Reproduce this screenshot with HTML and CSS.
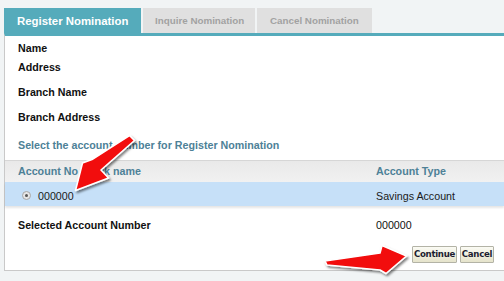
FILE: index.html
```html
<!DOCTYPE html>
<html>
<head>
<meta charset="utf-8">
<link rel="stylesheet" href="styles.css">
</head>
<body>
<div class="page">
  <div class="tabs">
    <div class="tab tab-active tab-1">Register Nomination</div>
    <div class="tab tab-2">Inquire Nomination</div>
    <div class="tab tab-3">Cancel Nomination</div>
  </div>
  <div class="panel">
    <div class="info">
      <div class="info-row r1">Name</div>
      <div class="info-row r2">Address</div>
      <div class="info-row r3">Branch Name</div>
      <div class="info-row r4">Branch Address</div>
      <div class="prompt">Select the account number for Register Nomination</div>
    </div>
    <div class="grid thead">
      <div>Account No &nbsp;Bank name</div>
      <div>Account Type</div>
    </div>
    <div class="grid trow">
      <div class="acc"><span class="radio"><span class="dot"></span></span>000000</div>
      <div>Savings Account</div>
    </div>
    <div class="grid selected-acc">
      <div class="label">Selected Account Number</div>
      <div>000000</div>
    </div>
    <div class="actions">
      <button class="btn btn-continue">Continue</button>
      <button class="btn btn-cancel">Cancel</button>
    </div>
  </div>
</div>
<svg class="overlay" width="504" height="281" viewBox="0 0 504 281">
  <defs>
    <filter id="sh" x="-20%" y="-20%" width="140%" height="140%">
      <feDropShadow dx="1.5" dy="2" stdDeviation="1.3" flood-color="#000" flood-opacity="0.5"/>
    </filter>
  </defs>
  <g filter="url(#sh)" fill="#f20a0a" stroke="#ffffff" stroke-width="1.6" stroke-linejoin="round">
    <path d="M129.5,135.5 L134.5,140.5 L101,170 L108.5,178 L75.5,190.5 L82.5,163 L92,159.5 Z"/>
    <path d="M325,261 L380,253 L382,245.5 L406.5,256 L386,273.5 L380,270 L327,265 Z"/>
  </g>
</svg>
</body>
</html>
```

FILE: styles.css
```css
html, body {
  margin: 0;
  padding: 0;
}
body {
  width: 504px;
  height: 281px;
  overflow: hidden;
  background: #f1f4f5;
  font-family: "Liberation Sans", Arial, sans-serif;
  position: relative;
}
.page {
  padding: 8px 0 0 4px;
}
.tabs {
  display: flex;
  gap: 2px;
  height: 25px;
}
.tab {
  box-sizing: border-box;
  height: 25px;
  line-height: 26px;
  font-weight: bold;
  white-space: nowrap;
  background: #e0e0e0;
  color: #a2a2a2;
  font-size: 9.8px;
  padding-left: 12px;
}
.tab-active {
  background: #55abbb;
  color: #ffffff;
  font-size: 11.4px;
  padding-left: 13px;
}
.tab-1 { width: 137px; }
.tab-2 { width: 112px; }
.tab-3 { width: 115px; padding-left: 13px; }

.panel {
  background: #ffffff;
  border-top: 3px solid #55abbb;
  border-left: 1px solid #c9c9c9;
  border-bottom: 1px solid #c9c9c9;
  font-size: 10.7px;
  color: #111;
}
.info {
  padding: 3px 0 0 13px;
}
.info-row {
  font-weight: bold;
  line-height: 18px;
}
.r1 { height: 19px; }
.r2 { height: 25px; }
.r3 { height: 25px; }
.r4 { height: 26px; }
.prompt {
  margin-top: 2px;
  line-height: 18px;
  font-weight: bold;
  color: #4d8197;
  margin-bottom: 6px;
}
.grid {
  display: grid;
  grid-template-columns: 358px 1fr;
  padding-left: 13px;
  box-sizing: border-box;
}
.thead {
  height: 22px;
  line-height: 21px;
  border-top: 1px solid #d6d6d6;
  background: linear-gradient(#e9e9e9, #f1f1f1);
  color: #4d8197;
  font-weight: bold;
}
.trow {
  height: 24px;
  padding-top: 4px;
  line-height: 20px;
  background: #c6e0f8;
  box-shadow: 0 2px 2px rgba(0, 0, 0, 0.10);
  color: #1a1a1a;
  position: relative;
}
.acc {
  display: flex;
  align-items: center;
}
.radio {
  box-sizing: border-box;
  width: 9px;
  height: 9px;
  border-radius: 50%;
  border: 1px solid #a7a7a7;
  background: #e6e6e6;
  margin: -1px 7px 0 4px;
  display: flex;
  align-items: center;
  justify-content: center;
}
.dot {
  width: 3px;
  height: 3px;
  border-radius: 50%;
  background: #555;
}
.selected-acc {
  margin-top: 8px;
  line-height: 22px;
}
.selected-acc .label {
  font-weight: bold;
}
.actions {
  margin-top: 10px;
  padding: 0 10px 7px 0;
  display: flex;
  justify-content: flex-end;
  gap: 3px;
}
.btn {
  box-sizing: border-box;
  height: 17px;
  padding: 0;
  margin: 0;
  border: 1px solid #b3b3a6;
  border-radius: 1px;
  background: linear-gradient(#fbfbf4, #e5e3cb);
  color: #1c1c30;
  font-family: "DejaVu Sans", Verdana, sans-serif;
  font-weight: bold;
  font-size: 8.6px;
  letter-spacing: -0.3px;
  line-height: 15px;
}
.btn-continue { width: 45px; }
.btn-cancel { width: 34px; }
.overlay {
  position: absolute;
  left: 0;
  top: 0;
  pointer-events: none;
}
```
